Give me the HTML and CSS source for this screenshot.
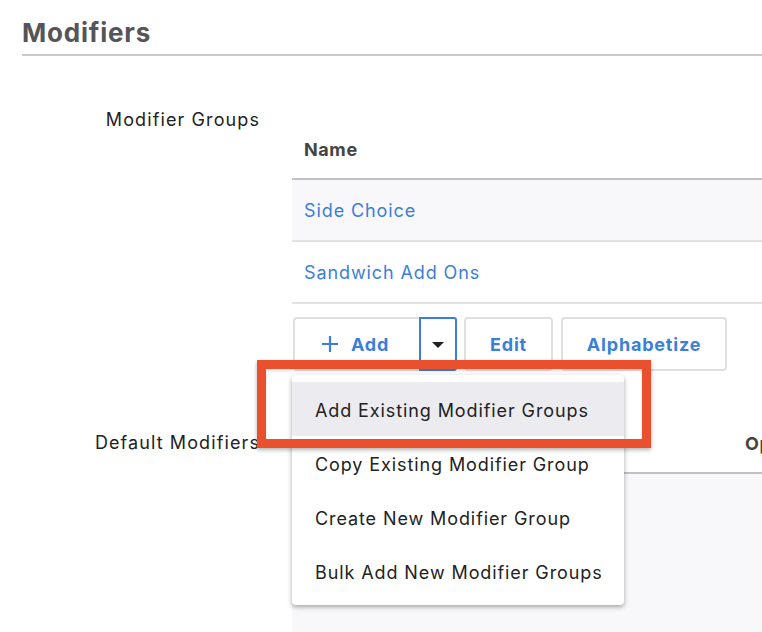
FILE: index.html
```html
<!DOCTYPE html>
<html>
<head>
<meta charset="utf-8">
<link rel="stylesheet" href="styles.css">
</head>
<body>
<div class="page">
  <h1 class="title">Modifiers</h1>

  <section class="field groups">
    <div class="label">Modifier Groups</div>
    <div class="content">
      <div class="table">
        <div class="thead"><div class="th">Name</div></div>
        <div class="row shaded"><a class="link">Side Choice</a></div>
        <div class="row"><a class="link">Sandwich Add Ons</a></div>
      </div>
      <div class="actions">
        <div class="split">
          <button class="btn btn-main">
            <svg class="plus" width="18" height="18" viewBox="0 0 18 18"><path d="M9 1v16M1 9h16" stroke="currentColor" stroke-width="2.2" fill="none"/></svg>
            <span>Add</span>
          </button>
          <button class="btn btn-toggle">
            <svg width="12" height="6" viewBox="0 0 12 6"><path d="M0 0h12L6 6z" fill="#222"/></svg>
          </button>
        </div>
        <button class="btn btn-edit">Edit</button>
        <button class="btn btn-alpha">Alphabetize</button>
        <div class="menu">
          <div class="item active">Add Existing Modifier Groups</div>
          <div class="item">Copy Existing Modifier Group</div>
          <div class="item">Create New Modifier Group</div>
          <div class="item">Bulk Add New Modifier Groups</div>
        </div>
      </div>
    </div>
  </section>

  <section class="field defaults">
    <div class="label label-defaults">Default Modifiers</div>
    <div class="content">
      <div class="table">
        <div class="thead two"><div class="th">Name</div><div class="th">Options</div></div>
        <div class="tbody-empty"></div>
      </div>
    </div>
  </section>

  <div class="callout"></div>
</div>
</body>
</html>
```

FILE: styles.css
```css
* { box-sizing: border-box; }
html, body { margin: 0; padding: 0; }
body {
  font-family: Inter, "Noto Sans", "Liberation Sans", sans-serif;
  color: #262626;
  background: #fff;
  width: 762px;
  height: 632px;
  overflow: hidden;
}
.page {
  position: relative;
  padding-left: 22px;
  height: 632px;
}
.title {
  margin: 0;
  padding-top: 17px;
  height: 56px;
  font-size: 26px;
  line-height: 32px;
  font-weight: 700;
  color: #555558;
  border-bottom: 2px solid #c8c8ce;
  letter-spacing: 0.8px;
}
.field {
  display: grid;
  grid-template-columns: 270px 1fr;
}
.groups { margin-top: 49px; }
.defaults { margin-top: 43px; }
.label {
  text-align: right;
  padding-right: 32px;
  padding-top: 1px;
  font-size: 18px;
  line-height: 28px;
  color: #222;
  white-space: nowrap;
  letter-spacing: 1.1px;
}
.label-defaults { padding-top: 15px; }
.groups .table { margin-top: 15px; }
.thead {
  height: 60px;
  display: flex;
  align-items: center;
  border-bottom: 2px solid #c2c2c4;
  overflow: hidden;
}
.th {
  padding-left: 12px;
  font-size: 18px;
  font-weight: 700;
  color: #444;
  letter-spacing: 0.6px;
  white-space: nowrap;
}
.thead.two .th:first-child { width: 441px; }
.row {
  height: 62px;
  display: flex;
  align-items: center;
  padding-left: 12px;
  padding-top: 1px;
  border-bottom: 2px solid #e2e2e4;
}
.row.shaded { background: #f8f8fa; }
.link {
  color: #3b7fd8;
  font-size: 18px;
  letter-spacing: 0.9px;
}
.actions {
  position: relative;
  display: flex;
  gap: 7px;
  margin-top: 13px;
  padding-left: 1px;
}
.split { display: flex; }
.btn {
  height: 54px;
  border: 2px solid #e0e0e4;
  border-radius: 4px;
  background: #fff;
  color: #3b7fd8;
  font-family: inherit;
  font-size: 18px;
  font-weight: 700;
  letter-spacing: 0.8px;
  padding: 0 24px;
  display: flex;
  align-items: center;
  justify-content: center;
  gap: 12px;
}
.btn-main {
  width: 126px;
  border-right: none;
  border-radius: 4px 0 0 4px;
  padding: 0 4px 0 0;
}
.btn-toggle {
  width: 38px;
  padding: 0;
  border: 2px solid #3b7fd8;
  border-radius: 0 3px 3px 0;
}
.btn-toggle svg { margin-top: 1px; }
.btn-edit { width: 89px; padding: 0; }
.btn-alpha { width: 166px; padding: 0; margin-left: 1px; }
.plus { color: #3b7fd8; }
.menu {
  position: absolute;
  left: 0;
  top: 58px;
  width: 332px;
  padding: 7px 0;
  background: #fff;
  border-radius: 4px;
  box-shadow: 0 2px 5px rgba(0,0,0,0.35);
  z-index: 5;
}
.item {
  height: 54px;
  display: flex;
  align-items: center;
  padding-left: 23px;
  padding-top: 3px;
  font-size: 18px;
  color: #222;
  white-space: nowrap;
  letter-spacing: 0.9px;
}
.item.active { background: #ebebf0; }
.tbody-empty {
  height: 160px;
  background: #f8f8fa;
}
.callout {
  position: absolute;
  left: 257px;
  top: 360px;
  width: 394px;
  height: 88px;
  border: 9px solid #e8502e;
  box-shadow: 0 2px 4px rgba(0,0,0,0.3), inset 0 2px 3px rgba(0,0,0,0.12);
  z-index: 10;
}
```
